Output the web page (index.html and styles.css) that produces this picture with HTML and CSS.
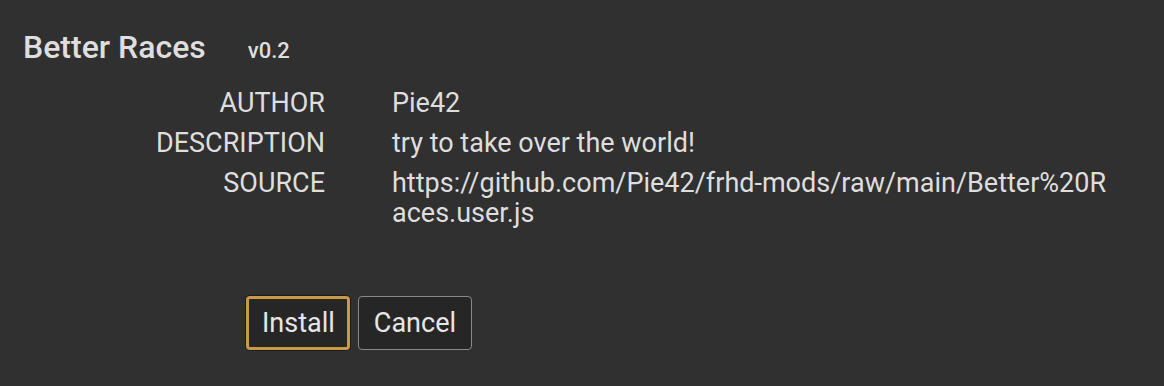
FILE: index.html
```html
<!DOCTYPE html>
<html>
<head>
<meta charset="utf-8">
<link rel="stylesheet" href="styles.css">
</head>
<body>
<div class="dialog">
  <div class="header">
    <span class="title">Better Races</span>
    <span class="version">v0.2</span>
  </div>
  <div class="info">
    <div class="label">AUTHOR</div>
    <div class="value">Pie42</div>
    <div class="label">DESCRIPTION</div>
    <div class="value">try to take over the world!</div>
    <div class="label">SOURCE</div>
    <div class="value">https://github.com/Pie42/frhd-mods/raw/main/Better%20Races.user.js</div>
  </div>
  <div class="actions">
    <button class="btn btn-primary">Install</button>
    <button class="btn">Cancel</button>
  </div>
</div>
</body>
</html>
```
FILE: styles.css
```css
html, body {
  margin: 0;
  padding: 0;
  background: #303030;
}
body {
  font-family: Roboto, "Liberation Sans", sans-serif;
  color: #dedede;
  width: 1164px;
  height: 386px;
  overflow: hidden;
}
.dialog {
  padding: 28px 0 0 23px;
}
.header {
  display: flex;
  align-items: baseline;
  gap: 42px;
  height: 40px;
}
.title {
  font-size: 32px;
  font-weight: 500;
}
.version {
  font-size: 22px;
  font-weight: 500;
}
.info {
  display: grid;
  grid-template-columns: 302px 725px;
  column-gap: 67px;
  row-gap: 10px;
  margin-top: 20px;
  font-size: 27px;
  line-height: 30px;
}
.label {
  text-align: right;
}
.value {
  word-break: break-all;
}
.actions {
  display: flex;
  gap: 8px;
  margin-top: 68px;
  padding-left: 223px;
}
.btn {
  font-family: Roboto, "Liberation Sans", sans-serif;
  font-size: 27px;
  color: #e6e6e6;
  background: #262626;
  border: 1px solid #8a8a8a;
  border-radius: 4px;
  height: 54px;
  padding: 0 15px;
}
.btn-primary {
  border: 3px solid #c99a45;
  padding: 0 12px 0 13px;
  box-shadow: 0 0 0 1px #1c1c1c;
}
```
